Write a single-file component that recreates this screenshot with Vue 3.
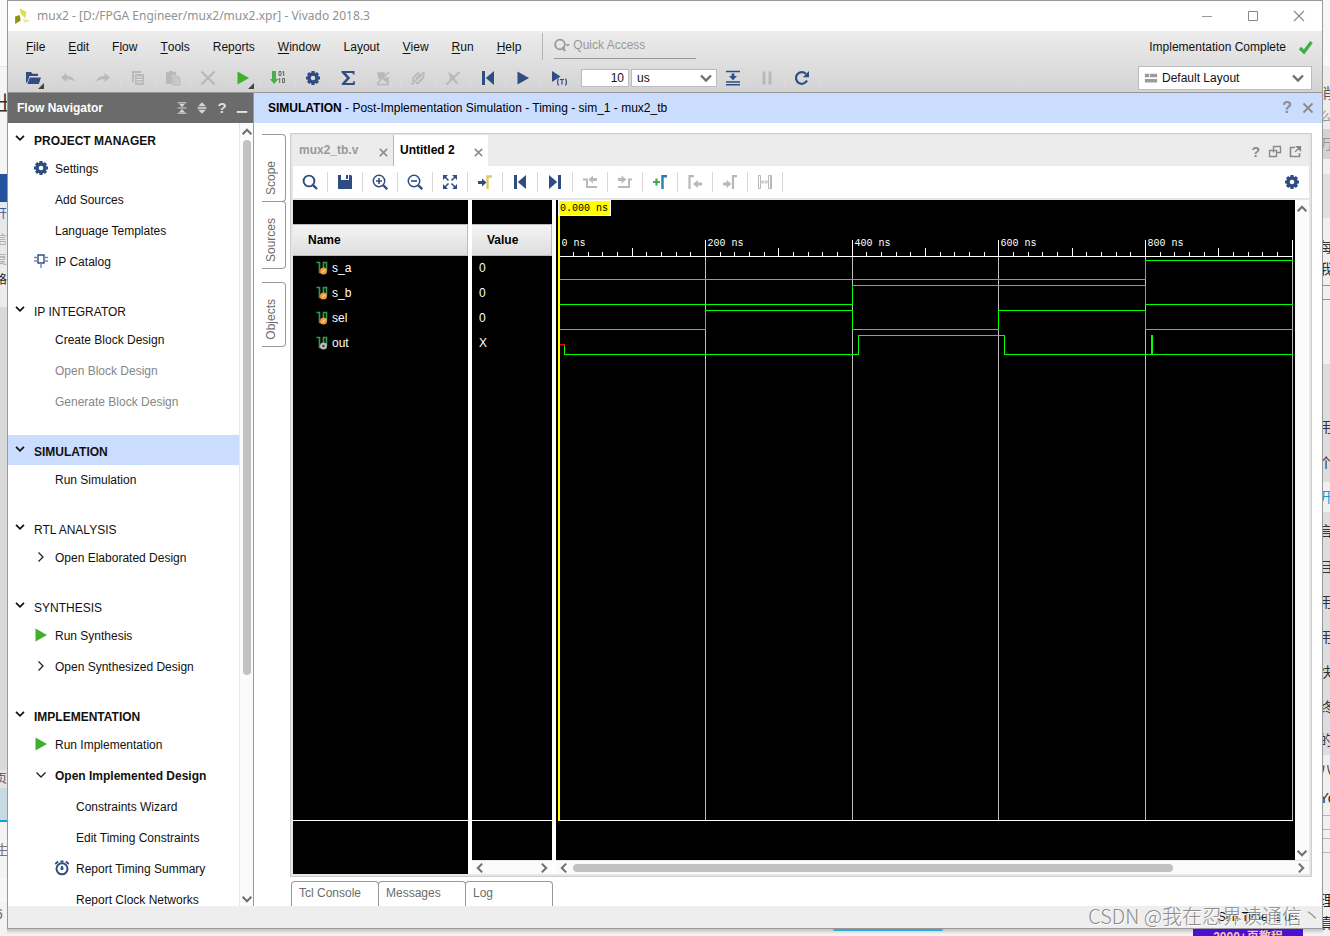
<script setup>
import { computed, onBeforeUnmount, onMounted, ref } from 'vue'

const B = '#2f4d82'
const G = '#b9b9b9'
const gear = `<g fill="${B}"><circle cx="8" cy="8" r="4" fill="none" stroke="${B}" stroke-width="3.4"/>` +
  [0, 45, 90, 135].map(a => `<path d="M6.4 1h3.2v3H6.4zM6.4 12h3.2v3H6.4z" transform="rotate(${a} 8 8)"/>`).join('') + '</g>'

const icons = {
  gear,
  open: `<path d="M1 13V2h5l1.5 1.8H13V6H4.5L2.4 12z" fill="${B}"/><path d="M4.8 7.6H16L13.8 14H2.4z" fill="${B}"/>`,
  undo: `<path d="M1 7.5 6.4 3v3c4.6 0 7.6 2 8.4 6-2-2.2-4.4-3-8.4-2.8V12z" fill="${G}"/>`,
  redo: `<path d="M15 7.5 9.6 3v3C5 6 2 8 1.2 12c2-2.2 4.4-3 8.4-2.8V12z" fill="${G}"/>`,
  copy: `<path d="M2 1h9v2H4v9H2zM5 4h9v11H5z" fill="${G}"/><path d="M6.5 7h6M6.5 9.5h6M6.5 12h6" stroke="#e3e3e3"/>`,
  paste: `<path d="M1 2h3V1h4v1h3v3H7v9H1z" fill="${G}"/><path d="M8 6h5l2 2v7H8z" fill="#c9c9c9" stroke="${G}"/>`,
  cross: `<path d="M1.5 1.5l13 13M14.5 1.5l-13 13" stroke="${G}" stroke-width="2.2"/>`,
  play: `<path d="M2.5 1.5 14 8 2.5 14.5z" fill="#3faf2c"/>`,
  bits: `<path d="M2 1h4v8h2.5l-4.5 5-4-5h2z" fill="#43b049"/><path d="M9 1.5h2v4H9zM13.7 1v5M12.5 2h1M9.7 8v5M8.500 9h1M12.500 8.500h2v4h-2z" fill="none" stroke="#666"/>`,
  sigma: `<path d="M1.5 1h13v3.6h-1.4L12.4 3H5.8l4.4 5-4.6 5h7l.8-1.8h1.4V15h-13v-1.6L6.8 8 1.5 2.4z" fill="${B}"/>`,
  off1: `<path d="M3 3h6v5H4zM2 13.5 14 2M2 14.5h12M9 9l4 4V8z" fill="${G}" stroke="${G}" stroke-width="1.6"/>`,
  off2: `<path d="M1.5 14.5 14.5 2M3 11V8l5-5 2 1M6 13h2l5-5 1-3M6 9l4-4" fill="none" stroke="${G}" stroke-width="1.8"/>`,
  off3: `<path d="M1.5 14.5 14.5 2" stroke="${G}" stroke-width="2"/><path d="M3 2l5 3 2 4 4 5-4-1-2-3-4 1 1-4z" fill="${G}"/>`,
  restart: `<path d="M2 1h3v14H2zM14 1v14L5.8 8z" fill="${B}"/>`,
  toend: `<path d="M11 1h3v14h-3zM2 1v14l8.2-7z" fill="${B}"/>`,
  run: `<path d="M2.5 1.5 14 8 2.5 14.5z" fill="${B}"/>`,
  runt: `<path d="M1 1 9.500 6.500 1 12z" fill="${B}"/><path d="M7.500 8.500q-1.800 3.500 0 7M14.500 8.500q1.800 3.500 0 7M9 9.500h4M11 9.500v5" fill="none" stroke="${B}" stroke-width="1.2"/>`,
  step: `<path d="M1 1.5h14M1 12h14M1 14.7h14" stroke="${B}" stroke-width="1.4"/><path d="M6.6 3.5h2.8V6H12l-4 4.3L4 6h2.6z" fill="${B}"/>`,
  pause: `<path d="M3.5 1.5h3v13h-3zM9.5 1.5h3v13h-3z" fill="${G}"/>`,
  reload: `<path d="M13 10.5A5.8 5.8 0 1 1 12 4" fill="none" stroke="${B}" stroke-width="2.2"/><path d="M15 1v6.2H8.8z" fill="${B}"/>`,
  search: `<circle cx="7" cy="7" r="5.4" fill="none" stroke="${B}" stroke-width="1.9"/><path d="M10.8 10.8l4.2 4.2" stroke="${B}" stroke-width="2.4"/>`,
  save: `<path d="M1 1h3v5h8V1h2l1 1v13H1z" fill="${B}"/><path d="M9 1h2v4H9z" fill="${B}"/>`,
  zin: `<circle cx="7" cy="7" r="5.7" fill="none" stroke="${B}" stroke-width="1.5"/><path d="M11 11l4.2 4.2" stroke="${B}" stroke-width="2.4"/><path d="M4 7h6M7 4v6" stroke="${B}" stroke-width="1.6"/>`,
  zout: `<circle cx="7" cy="7" r="5.7" fill="none" stroke="${B}" stroke-width="1.5"/><path d="M11 11l4.2 4.2" stroke="${B}" stroke-width="2.4"/><path d="M4 7h6" stroke="${B}" stroke-width="1.6"/>`,
  fit: `<path d="M1 1h5L1 6zM15 1v5l-5-5zM1 15v-5l5 5zM15 15h-5l5-5z" fill="${B}"/><path d="M2.5 2.5l4 4M13.5 2.5l-4 4M2.5 13.5l4-4M13.5 13.5l-4-4" stroke="${B}" stroke-width="1.6"/>`,
  tocur: `<path d="M1 7h4V4.5l4.500 4L5 12.500V10H1z" fill="${B}"/><path d="M10.500 15V2.500H15" fill="none" stroke="#e3c765" stroke-width="2.4"/>`,
  prev: `<path d="M1 5.5h4V13h10" fill="none" stroke="${G}" stroke-width="2"/><path d="M15 4v3h-4v2.5l-4.500-4 4.500-4V4z" fill="${G}"/>`,
  next: `<path d="M15 5.5h-3V13H1" fill="none" stroke="${G}" stroke-width="2"/><path d="M1 4v3h3.500v2.500l5-4-5-4V4z" fill="${G}"/>`,
  addmark: `<path d="M1 8h7M4.500 4.500v7" stroke="#3fae49" stroke-width="2.2"/><path d="M10.500 15V2.200H15" fill="none" stroke="#2f7ab5" stroke-width="2.4"/>`,
  mprev: `<path d="M2.500 15V2.200H7" fill="none" stroke="${G}" stroke-width="2.2"/><path d="M15 8.500v3h-4V14l-5-4 5-4v2.500z" fill="${G}"/>`,
  mnext: `<path d="M11 15V2.200h4" fill="none" stroke="${G}" stroke-width="2.2"/><path d="M1 8.500v3h3.500V14l5-4-5-4v2.500z" fill="${G}"/>`,
  swap: `<path d="M1.500 1.500h2v13h-2zM14.500 1v14M11.500 1.500h2v13h-2z" fill="none" stroke="${G}"/><path d="M4.500 8h6M6.500 6l-2 2 2 2M8.500 6l2 2-2 2" fill="none" stroke="${G}"/>`,
  chip: `<path d="M5 2h6v8H5z" fill="none" stroke="${B}" stroke-width="1.4"/><path d="M1 4.500h4M1 8h4M11 4.500h4M11 8h4M8 10v5" stroke="#6f89b5" stroke-width="1.4"/>`,
  clock: `<circle cx="8" cy="8.800" r="5.500" fill="none" stroke="${B}" stroke-width="2"/><path d="M8 6v4M6.500 8.500h3M1.200 4l3-2.500M14.800 4l-3-2.500M6.500 1.500h3" stroke="${B}" stroke-width="1.800"/>`,
  right: `<path d="M5.500 3.500 10 8l-4.500 4.500" fill="none" stroke="#222" stroke-width="1.3"/>`,
  down: `<path d="M3.500 5.500 8 10l4.500-4.500" fill="none" stroke="#222" stroke-width="1.3"/>`,
  fold: `<path d="M3.500 5.500 8 10l4.500-4.500" fill="none" stroke="#111" stroke-width="2"/>`,
  arrow: `<path d="M3 5.500l5 5 5-5" fill="none" stroke="#707070" stroke-width="2.4"/>`,
  check: `<path d="M2 9l4 4 7.500-10" fill="none" stroke="#3fae49" stroke-width="3.2"/>`,
  layout: `<path d="M1 3h5v4H1zM7 3h8v4H7zM1 9h14v4H1z" fill="#9b9b9b"/>`,
  quick: `<circle cx="6" cy="7.500" r="4.800" fill="none" stroke="#999" stroke-width="1.8"/><path d="M8.500 10l2.500 4" stroke="#999" stroke-width="2.2"/><path d="M11.500 7H16l-2.200 2.400z" fill="#999"/>`,
  collapse: `<path d="M3 8h10M3 2h10M3 14h10" stroke="#d5d5d5" stroke-width="1.4"/><path d="M4.500 3h7L8 7zM4.500 13h7L8 9z" fill="#d5d5d5"/>`,
  expand: `<path d="M8 1.500 12.500 6h-9zM8 14.500 3.500 10h9z" fill="#d5d5d5"/><path d="M3 8h10" stroke="#d5d5d5" stroke-width="1.8"/>`,
  mini: `<path d="M2 12.500h12" stroke="#e2e2e2" stroke-width="2.2"/>`,
  close: `<path d="M3.500 3.500l9 9M12.500 3.500l-9 9" stroke="#8b8b8b" stroke-width="1.9"/>`,
  restore: `<path d="M6.500 8.500v-6h7v6h-4M2.500 6.500h7v6h-7z" fill="none" stroke="#888" stroke-width="1.3"/>`,
  popout: `<path d="M8 3.500H3.500v9h9V9" fill="none" stroke="#888" stroke-width="1.6"/><path d="M9.500 2.500h4v4zM8 8l4-4" fill="#888" stroke="#888" stroke-width="1.2"/>`,
  wmin: `<path d="M3 8.500h10" stroke="#999"/>`,
  wmax: `<path d="M3.500 3.500h9v9h-9z" fill="none" stroke="#888"/>`,
  wclose: `<path d="M3 3l10 10M13 3 3 13" stroke="#888" stroke-width="1.1"/>`,
  logo: `<path d="M5 1l6 3.500-1 5.500-4-4z" fill="#d8df4f"/><path d="M8 10.500l7 1.800-6 1.800z" fill="#e9eda2"/><path d="M1 8.500l4-1.500 1 5-5 3z" fill="#8d9412"/>`,
  sigin: `<path d="M2.500 2.500h3v10h4v-10h3v8" fill="none" stroke="#2f9e4a" stroke-width="1.6"/><circle cx="9.500" cy="11" r="3.500" fill="#f29a38"/><path d="M8 12.500l3-3" stroke="#fff"/>`,
  sigout: `<path d="M2.500 2.500h3v10h4v-10h3v8" fill="none" stroke="#2f9e4a" stroke-width="1.6"/><circle cx="9.500" cy="11" r="3.500" fill="#bbb"/><circle cx="9.500" cy="11" r="1.200" fill="#444"/>`
}

const menus = [
  ['', 'F', 'ile'], ['', 'E', 'dit'], ['F', 'l', 'ow'], ['', 'T', 'ools'], ['Rep', 'o', 'rts'],
  ['', 'W', 'indow'], ['La', 'y', 'out'], ['', 'V', 'iew'], ['', 'R', 'un'], ['', 'H', 'elp']
]
const tools = ['open', 'undo', 'redo', 'copy', 'paste', 'cross', 'play', 'bits', 'gear', 'sigma', 'off1', 'off2', 'off3', 'restart', 'run', 'runt']
const tools2 = ['step', 'pause', 'reload']
const waveTools = ['search', 'save', 'zin', 'zout', 'fit', 'tocur', 'restart', 'toend', 'prev', 'next', 'addmark', 'mprev', 'mnext', 'swap']

const sections = [
  { title: 'PROJECT MANAGER', bold: true, items: [
    { t: 'Settings', icon: 'gear' }, { t: 'Add Sources' }, { t: 'Language Templates' }, { t: 'IP Catalog', icon: 'chip' }] },
  { title: 'IP INTEGRATOR', items: [
    { t: 'Create Block Design' }, { t: 'Open Block Design', off: true }, { t: 'Generate Block Design', off: true }] },
  { title: 'SIMULATION', bold: true, active: true, items: [{ t: 'Run Simulation' }] },
  { title: 'RTL ANALYSIS', items: [{ t: 'Open Elaborated Design', icon: 'right' }] },
  { title: 'SYNTHESIS', items: [{ t: 'Run Synthesis', icon: 'play' }, { t: 'Open Synthesized Design', icon: 'right' }] },
  { title: 'IMPLEMENTATION', bold: true, items: [
    { t: 'Run Implementation', icon: 'play' }, { t: 'Open Implemented Design', icon: 'down', bold: true },
    { t: 'Constraints Wizard', sub: true }, { t: 'Edit Timing Constraints', sub: true },
    { t: 'Report Timing Summary', sub: true, icon: 'clock' }, { t: 'Report Clock Networks', sub: true }] }
]

const signals = [
  { name: 's_a', value: '0', icon: 'sigin', edges: [[0, 0], [800, 1]] },
  { name: 's_b', value: '0', icon: 'sigin', edges: [[0, 0], [400, 1], [800, 0]] },
  { name: 'sel', value: '0', icon: 'sigin', edges: [[0, 0], [200, 1], [400, 0], [600, 1], [800, 0]] },
  { name: 'out', value: 'X', icon: 'sigout', edges: [[8, 0], [409, 1], [608, 0], [808, 1], [810, 0]] }
]

const plot = ref(null)
const w = ref(739)
const h = ref(660)
let observer
onMounted(() => {
  observer = new ResizeObserver(() => {
    w.value = plot.value.clientWidth
    h.value = plot.value.clientHeight
  })
  observer.observe(plot.value)
})
onBeforeUnmount(() => observer.disconnect())

const xAt = t => Math.floor(2.7 + t * (w.value - 5.5) / 1000) + 0.5
const floorY = computed(() => h.value - 39.5)
const majors = [0, 200, 400, 600, 800]
const ticks = computed(() => Array.from({ length: 51 }, (_, i) => {
  const top = i % 10 === 0 ? 40 : i % 5 === 0 ? 48 : 52
  return i ? `M${xAt(i * 20)} ${top}V57` : ''
}).join(''))
const traces = computed(() => signals.map((s, i) => {
  const y = v => (v ? 60.5 : 79.5) + i * 25
  let d = ''
  s.edges.forEach(([t, v], k) => {
    d += k ? `H${xAt(t)}V${y(v)}` : `M${t ? xAt(t) : 4} ${t ? 145 : y(v)}V${y(v)}`
  })
  return d + `H${xAt(1000)}`
}))

// Slivers of the page that lies behind the application window: [height, background, text, colour, size]
const leftEdge = [
  [66, '#fafafa'], [1, '#e2e2e2'], [19, '#f5f5f5'], [36, '#f5f5f5', '出', '#333', 20], [52, '#f5f5f5'],
  [28, '#25529c'], [24, '#e4e8ef', '开', '#3b5c95', 12], [28, '#e9e9e9', '信', '#aaa', 12], [12, '#e9e9e9', '复', '#aaa', 12],
  [28, '#ececec', '格', '#222', 12], [13, '#ececec'], [463, '#d9d9d9'], [18, '#e4e4e4', '页', '#555', 12],
  [32, '#c8dbe3'], [2, '#0aa3dc'], [56, '#f3f3f3', '生', '#777', 14], [24, '#f7f7f7'], [24, '#f3f3f3', '6', '#666', 14], [10, '#f3f3f3']
]
const rightEdge = [
  [66, '#f7f7f7'], [16, '#ededed'], [22, '#ededed', '消', '#555', 14], [25, '#ededed', '么', '#999', 13],
  [30, '#d2d3d6', '万', '#999', 14], [15, '#f0f0f0'], [44, '#dfe0e2'], [18, '#f0f0f0'],
  [22, '#f0f0f0', '每', '#333', 14], [22, '#f0f0f0', '我', '#333', 14], [5, '#f0f0f0'], [1, '#8c8f9a'], [13, '#f0f0f0'], [1, '#8c8f9a'],
  [64, '#f0f0f0'], [45, '#dcdddf'], [35, '#dcdddf', '用', '#333', 14], [38, '#dcdddf', '个', '#333', 14], [30, '#f0f0f0', '开', '#1a9bd7', 14],
  [37, '#dcdddf', '言', '#333', 14], [35, '#dcdddf', '目', '#333', 14], [35, '#dcdddf', '用', '#333', 14], [35, '#dcdddf', '用', '#333', 14],
  [35, '#dcdddf', '快', '#333', 14], [35, '#dcdddf', '终', '#333', 14], [31, '#dcdddf', '的', '#333', 14],
  [30, '#f0f0f0', '八', '#333', 14], [24, '#f0f0f0', 'Ye', '#333', 15], [26, '#f0f0f0', '▢', '#888', 15], [20, '#f0f0f0', '▢', '#888', 15],
  [34, '#f0f0f0'], [22, '#f0f0f0', '理', '#222', 15], [24, '#f0f0f0', '真', '#222', 15]
]
const segStyle = s => ({ height: s[0] + 'px', background: s[1], color: s[3], fontSize: (s[4] || 12) + 'px' })
</script>

<template>
  <div class="desktop">
    <div class="edge left"><div v-for="(s, i) in leftEdge" :key="i" class="seg" :style="segStyle(s)"><span>{{ s[2] }}</span></div></div>

    <div class="window">
      <header class="title">
        <svg class="i18" viewBox="0 0 16 16" v-html="icons.logo" />
        <span>mux2 - [D:/FPGA Engineer/mux2/mux2.xpr] - Vivado 2018.3</span>
        <div class="winbtns">
          <button v-for="n in ['wmin', 'wmax', 'wclose']" :key="n" :aria-label="n.slice(1)"><svg viewBox="0 0 16 16" v-html="icons[n]" /></button>
        </div>
      </header>

      <div class="chrome">
        <div class="chrome-left">
          <div class="menus">
            <button v-for="m in menus" :key="m.join('')">{{ m[0] }}<u>{{ m[1] }}</u>{{ m[2] }}</button>
            <i class="vline" />
            <label class="quick"><svg viewBox="0 0 16 16" v-html="icons.quick" /><input placeholder="Quick Access" aria-label="Quick Access"></label>
          </div>
          <div class="tools">
            <button v-for="n in tools" :key="n" class="cell" :class="{ more: n === 'open' || n === 'play' }" :aria-label="n"><svg viewBox="0 0 16 16" v-html="icons[n]" /></button>
            <input class="amount" value="10" aria-label="Run time">
            <div class="pick unit">
              <select aria-label="Time unit"><option>us</option><option>ns</option></select>
              <svg viewBox="0 0 16 16" v-html="icons.arrow" />
            </div>
            <button v-for="n in tools2" :key="n" class="cell" :aria-label="n"><svg viewBox="0 0 16 16" v-html="icons[n]" /></button>
          </div>
        </div>
        <div class="chrome-right">
          <div class="state">Implementation Complete <svg viewBox="0 0 16 16" v-html="icons.check" /></div>
          <div class="pick preset">
            <svg class="lead" viewBox="0 0 16 16" v-html="icons.layout" />
            <select aria-label="Layout"><option>Default Layout</option></select>
            <svg viewBox="0 0 16 16" v-html="icons.arrow" />
          </div>
        </div>
      </div>

      <div class="body">
        <aside class="nav">
          <div class="nav-head">
            <b>Flow Navigator</b>
            <button aria-label="Collapse all"><svg viewBox="0 0 16 16" v-html="icons.collapse" /></button>
            <button aria-label="Expand all"><svg viewBox="0 0 16 16" v-html="icons.expand" /></button>
            <button class="q">?</button>
            <button aria-label="Minimize"><svg viewBox="0 0 16 16" v-html="icons.mini" /></button>
          </div>
          <div class="nav-body">
            <nav>
              <section v-for="s in sections" :key="s.title">
                <button class="sec" :class="{ bold: s.bold, active: s.active }"><svg viewBox="0 0 16 16" v-html="icons.fold" /><span>{{ s.title }}</span></button>
                <button v-for="it in s.items" :key="it.t" class="item" :class="{ sub: it.sub, bold: it.bold }" :disabled="it.off">
                  <svg viewBox="0 0 16 16" v-html="icons[it.icon] || ''" /><span>{{ it.t }}</span>
                </button>
              </section>
            </nav>
            <div class="vbar">
              <svg class="up" viewBox="0 0 16 16" v-html="icons.arrow" />
              <div class="track"><i class="thumb" /></div>
              <svg viewBox="0 0 16 16" v-html="icons.arrow" />
            </div>
          </div>
        </aside>

        <main class="main">
          <div class="main-head">
            <span><b>SIMULATION</b> - Post-Implementation Simulation - Timing - sim_1 - mux2_tb</span>
            <button class="q">?</button>
            <button aria-label="Close"><svg viewBox="0 0 16 16" v-html="icons.close" /></button>
          </div>
          <div class="work">
            <div class="vtabs">
              <button><span>Scope</span></button>
              <button><span>Sources</span></button>
              <button class="apart"><span>Objects</span></button>
            </div>
            <div class="col">
              <div class="panel">
                <div class="tabs">
                  <div class="tab"><span>mux2_tb.v</span><button aria-label="Close mux2_tb.v"><svg viewBox="0 0 16 16" v-html="icons.close" /></button></div>
                  <div class="tab on"><span>Untitled 2</span><button aria-label="Close Untitled 2"><svg viewBox="0 0 16 16" v-html="icons.close" /></button></div>
                  <div class="tab-tools">
                    <button class="q">?</button>
                    <button aria-label="Restore"><svg viewBox="0 0 16 16" v-html="icons.restore" /></button>
                    <button aria-label="Float"><svg viewBox="0 0 16 16" v-html="icons.popout" /></button>
                  </div>
                </div>
                <div class="wtools">
                  <button v-for="n in waveTools" :key="n" class="wcell" :aria-label="n"><svg viewBox="0 0 16 16" v-html="icons[n]" /></button>
                  <button class="wgear" aria-label="Settings"><svg viewBox="0 0 16 16" v-html="icons.gear" /></button>
                </div>
                <div class="wave">
                  <div class="names dark tall">
                    <table>
                      <thead><tr><th>Name</th></tr></thead>
                      <tbody><tr v-for="s in signals" :key="s.name"><td><svg viewBox="0 0 16 16" v-html="icons[s.icon]" /><span>{{ s.name }}</span></td></tr></tbody>
                    </table>
                    <i class="rule" />
                  </div>
                  <div class="values">
                    <div class="dark">
                      <table>
                        <thead><tr><th>Value</th></tr></thead>
                        <tbody><tr v-for="s in signals" :key="s.name"><td>{{ s.value }}</td></tr></tbody>
                      </table>
                      <i class="rule" />
                    </div>
                    <div class="hbar"><svg class="lt" viewBox="0 0 16 16" v-html="icons.arrow" /><div class="track" /><svg class="rt" viewBox="0 0 16 16" v-html="icons.arrow" /></div>
                  </div>
                  <div class="plot-col">
                    <div class="plot-row">
                      <div ref="plot" class="plot">
                        <svg :width="w" :height="h" shape-rendering="crispEdges" fill="none">
                          <path v-for="t in [200, 400, 600, 800, 1000]" :key="t" :d="`M${xAt(t)} 57V${floorY}`" stroke="#bdbdbd" />
                          <path :d="`M2 56.5H${xAt(1000)}M2 ${floorY}H${xAt(1000) + 0.5}${ticks}`" stroke="#fff" />
                          <path v-for="(d, i) in traces" :key="i" :d="d" stroke="#00ff00" />
                          <path d="M4 144.5H8.5" stroke="#ff0000" />
                          <path :d="`M3 16V${floorY + 0.5}`" stroke="#ffff00" stroke-width="2" />
                          <rect x="2.5" y="0.5" width="52" height="15" fill="#ffff00" stroke="#fff" />
                          <text x="4" y="11" fill="#000">0.000 ns</text>
                          <text v-for="t in majors" :key="t" :x="xAt(t) + (t ? 2 : 3)" y="46" fill="#fff">{{ t }} ns</text>
                        </svg>
                      </div>
                      <div class="vbar slim">
                        <svg class="up" viewBox="0 0 16 16" v-html="icons.arrow" />
                        <div class="track" />
                        <svg viewBox="0 0 16 16" v-html="icons.arrow" />
                      </div>
                    </div>
                    <div class="hbar"><svg class="lt" viewBox="0 0 16 16" v-html="icons.arrow" /><div class="track"><i class="hthumb" /></div><svg class="rt" viewBox="0 0 16 16" v-html="icons.arrow" /></div>
                  </div>
                </div>
              </div>
              <div class="btabs"><button>Tcl Console</button><button>Messages</button><button>Log</button></div>
            </div>
          </div>
        </main>
      </div>

      <footer class="status">
        <span>Sim Time: 1 us</span>
        <div class="mark">CSDN @我在忍界读通信丶</div>
      </footer>
    </div>

    <div class="edge right"><div v-for="(s, i) in rightEdge" :key="i" class="seg" :style="segStyle(s)"><span>{{ s[2] }}</span></div></div>
    <div class="under"><i class="pill" /><div class="promo">2000+页教程</div></div>
  </div>
</template>

<style>
body { overflow: hidden; background: #f3f3f3; }
</style>

<style scoped>
* { box-sizing: border-box; }
.desktop {
  display: grid; grid-template: minmax(0, 1fr) 7px / 7px minmax(0, 1fr) 7px; height: 100vh;
  font: 12px/16px "Liberation Sans", "Noto Sans CJK SC", sans-serif; color: #111;
}
button, input, select { font: inherit; color: inherit; background: none; border: 0; padding: 0; margin: 0; border-radius: 0; }
button { text-align: left; display: flex; align-items: center; white-space: nowrap; }
svg { width: 16px; height: 16px; flex: none; display: block; }
.edge { overflow: hidden; }
.left { grid-area: 1 / 1 / 3 / 2; }
.right { grid-area: 1 / 3 / 3 / 4; }
.under { grid-area: 2 / 2; display: flex; justify-content: flex-end; background: linear-gradient(#c4c4c4, #f2f2f2 5px); overflow: hidden; }
.seg { display: flex; align-items: center; white-space: nowrap; line-height: 1; overflow: hidden; }
.left .seg span { margin-left: -5px; }
.right .seg span { margin-left: -4px; }
.pill { width: 110px; height: 2px; background: #35a8d8; margin-right: 250px; border-radius: 0 0 8px 8px; }
.promo { width: 110px; height: 7px; margin-right: 20px; background: #4a0fd0; color: #f6c7a8; font-weight: bold; line-height: 16px; text-align: center; overflow: hidden; }

.window { grid-area: 1 / 2; border: 1px solid #999; display: flex; flex-direction: column; background: #fff; min-width: 0; }
.title { height: 30px; display: flex; align-items: center; gap: 5px; padding-left: 6px; color: #919191; font-family: "Noto Sans", sans-serif; flex: none; }
.i18 { width: 18px; height: 18px; }
.winbtns { margin-left: auto; display: flex; gap: 30px; padding-right: 15px; }

.chrome { height: 62px; flex: none; display: flex; justify-content: space-between; background: linear-gradient(#ececec, #d3d3d3); border-bottom: 1px solid #969696; }
.menus { height: 31px; display: flex; align-items: center; gap: 23px; padding-left: 18px; }
.menus u { text-underline-offset: 2px; }
.vline { width: 1px; height: 27px; background: #b5b5b5; margin: 0 -12px 0 -2px; }
.quick { display: flex; align-items: center; gap: 3px; width: 142px; height: 28px; border-bottom: 1px solid #999; align-self: flex-start; }
.quick input { width: 110px; outline: 0; }
.quick input::placeholder { color: #999; opacity: 1; }
.tools { height: 30px; display: flex; align-items: center; padding: 2px 0 0 8px; }
.cell { width: 35px; height: 20px; justify-content: center; border-right: 1px solid #dadada; position: relative; }
.tools .cell:nth-child(16) { border-right: 0; }
.more::after { content: ""; position: absolute; right: 6px; bottom: -1px; border: 3px solid; border-color: transparent #444 #444 transparent; }
.amount { width: 48px; height: 18px; margin: 0 2px 0 5px; background: #fff; border: 1px solid #bcbcbc; text-align: right; padding-right: 4px; }
.pick { display: flex; align-items: center; background: #fff; border: 1px solid #bcbcbc; padding: 0 5px; }
.pick select { appearance: none; flex: 1; min-width: 0; }
.unit { width: 86px; height: 18px; padding-right: 2px; }
.tools .unit + .cell { width: 33px; }
.chrome-right { display: flex; flex-direction: column; align-items: flex-end; padding-right: 10px; }
.state { height: 31px; display: flex; align-items: center; gap: 12px; margin-right: -2px; white-space: nowrap; }
.preset { width: 174px; height: 24px; margin-top: 4px; }
.lead { width: 14px; height: 14px; margin-right: 4px; }

.body { flex: 1; min-height: 0; display: flex; }
.nav { width: 246px; flex: none; border-right: 1px solid #999; display: flex; flex-direction: column; }
.nav-head { height: 30px; flex: none; background: #6b6b6b; color: #fff; display: flex; align-items: center; gap: 6px; padding: 0 4px 0 9px; }
.nav-head b { flex: 1; }
.nav-head svg { width: 14px; height: 14px; }
.q { font-size: 15px; font-weight: bold; color: #8b8b8b; }
.nav-head .q { color: #ddd; width: 14px; justify-content: center; }
.nav-body { flex: 1; min-height: 0; display: flex; }
nav { flex: 1; overflow: hidden; padding-top: 1px; }
nav section { margin-bottom: 17px; }
.sec { width: 100%; height: 30px; padding: 3px 0 0 5px; gap: 7px; }
.sec svg { width: 14px; height: 14px; margin-bottom: 5px; }
.active { background: #cbddfe; }
.bold { font-weight: bold; }
.item { width: 100%; height: 31px; padding: 0 0 2px 25px; gap: 6px; }
.item svg { margin-bottom: 2px; }
.item.sub { padding-left: 46px; }
.item:disabled { color: #868686; }
.vbar { width: 14px; flex: none; display: flex; flex-direction: column; align-items: center; justify-content: space-between; background: #fbfbfb; border-left: 1px solid #e6e6e6; padding: 2px 0 0; }
.vbar svg, .hbar svg { width: 14px; height: 14px; }
.up { transform: rotate(180deg); }
.lt { transform: rotate(90deg); }
.rt { transform: rotate(-90deg); }
.track { flex: 1; }
.thumb { display: block; width: 8px; height: 71%; margin-top: 1px; border-radius: 4px; background: #c1c1c1; }

.main { flex: 1; min-width: 0; display: flex; flex-direction: column; }
.main-head { height: 30px; flex: none; background: #cbddfe; display: flex; align-items: center; gap: 8px; padding: 0 6px 0 14px; color: #000; }
.main-head span { flex: 1; }
.main-head .q { font-size: 16px; }
.work { flex: 1; min-height: 0; display: flex; padding: 10px 10px 0 8px; gap: 4px; }
.vtabs { width: 24px; flex: none; padding-top: 1px; }
.vtabs button { width: 24px; height: 68px; margin-bottom: -1px; border: 1px solid #999; border-left: 0; border-radius: 0 4px 4px 0; align-items: flex-end; padding: 0 0 6px 1px; color: #6c6c6c; }
.vtabs .apart { margin-top: 14px; height: 65px; }
.vtabs span { writing-mode: vertical-rl; transform: rotate(180deg); }
.col { flex: 1; min-width: 0; display: flex; flex-direction: column; }
.panel { flex: 1; min-height: 0; display: flex; flex-direction: column; border: 1px solid #cdcdcd; padding: 1px 2px 2px; background: #e6e6e6; }
.tabs { height: 31px; flex: none; background: #ececec; display: flex; }
.tab { display: flex; align-items: center; justify-content: space-between; width: 101px; padding: 0 3px 1px 6px; font-weight: bold; color: #999; border-right: 1px solid #b5b5b5; }
.tab.on { width: 94px; background: #fff; color: #000; border: 0; }
.tab svg { width: 13px; height: 13px; }
.tab button { padding-top: 5px; }
.tab-tools { margin-left: auto; display: flex; align-items: center; gap: 4px; padding: 2px 6px 0 0; }
.tab-tools .q { font-size: 14px; margin-right: 3px; }
.wtools { height: 32px; flex: none; background: #fff; display: flex; align-items: center; margin-bottom: 2px; }
.wcell { width: 35px; height: 20px; justify-content: center; border-right: 1px solid #d8d8d8; }
.wgear { margin-left: auto; padding-right: 9px; }
.wave { flex: 1; min-height: 0; display: flex; gap: 4px; background: #fff; }
.names { width: 175px; flex: none; }
.values { width: 80px; flex: none; display: flex; flex-direction: column; }
.values .dark { flex: 1; }
.dark { background: #000; color: #fff; display: flex; flex-direction: column; padding: 24px 0 39px; }
.dark.tall { padding-bottom: 53px; }
.rule { height: 1px; background: #fff; margin-top: auto; }
table { width: 100%; border-collapse: separate; border-spacing: 0; }
th { height: 32px; padding: 0 0 1px 15px; text-align: left; color: #000; background: linear-gradient(#f4f4f4, #dedede); border: 1px solid #bbb; border-left: 0; }
td { height: 25px; padding: 0 0 1px 7px; }
.names td { display: flex; align-items: center; gap: 2px; padding-left: 21px; }
.plot-col { flex: 1; min-width: 0; display: flex; flex-direction: column; }
.plot-row { flex: 1; min-height: 0; display: flex; }
.plot { flex: 1; min-width: 0; background: #000; overflow: hidden; }
.plot svg { width: auto; height: auto; }
.plot text { font: 10px "Liberation Mono", monospace; }
.slim { border: 0; }
.hbar { height: 14px; flex: none; display: flex; align-items: center; background: #fbfbfb; border-top: 1px solid #e6e6e6; padding: 0 1px; }
.hthumb { display: block; width: 83%; height: 8px; margin-left: 2px; border-radius: 4px; background: #c1c1c1; }
.btabs { display: flex; padding: 4px 0 0 1px; height: 29px; flex: none; }
.btabs button { width: 88px; margin-right: -1px; border: 1px solid #999; border-bottom: 0; border-radius: 4px 4px 0 0; padding: 0 0 3px 7px; color: #6c6c6c; }
.status { height: 22px; flex: none; background: #eee; display: flex; align-items: center; justify-content: flex-end; padding-right: 25px; position: relative; }
.mark { position: absolute; right: 0; top: -5px; font: 300 20px/30px "Noto Sans CJK SC", sans-serif; color: #8c8c8c; text-shadow: 1px 1px #fff; white-space: nowrap; }
</style>
